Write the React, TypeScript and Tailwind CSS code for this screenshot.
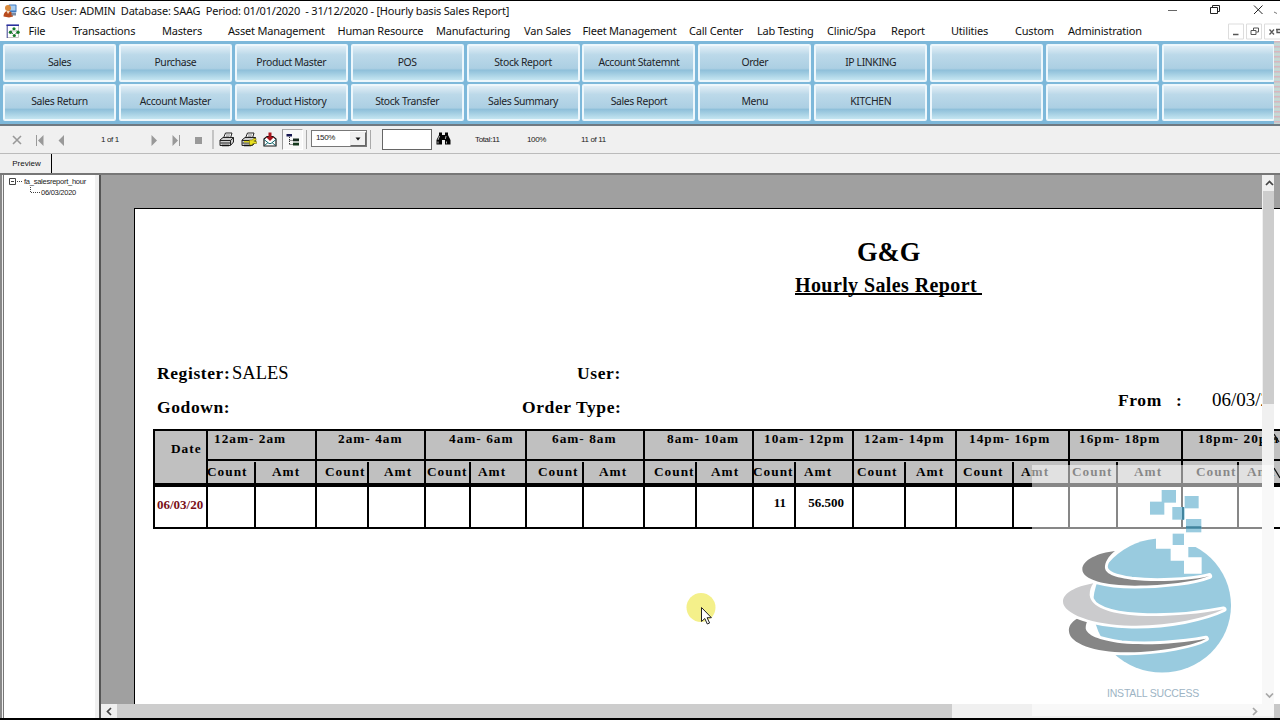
import React from "react";

const menus: [string, string][] = [
  ["File", "w-[44px]"],
  ["Transactions", "w-[89.5px]"],
  ["Masters", "w-[66px]"],
  ["Asset Management", "w-[109.5px]"],
  ["Human Resource", "w-[98.5px]"],
  ["Manufacturing", "w-[88px]"],
  ["Van Sales", "w-[58.5px]"],
  ["Fleet Management", "w-[106.5px]"],
  ["Call Center", "w-[68px]"],
  ["Lab Testing", "w-[70px]"],
  ["Clinic/Spa", "w-[64px]"],
  ["Report", "w-[60px]"],
  ["Utilities", "w-[64px]"],
  ["Custom", "w-[53px]"],
  ["Administration", "w-[152px]"],
];

const buttons = [
  ["Sales", "Purchase", "Product Master", "POS", "Stock Report", "Account Statemnt", "Order", "IP LINKING", "", "", ""],
  ["Sales Return", "Account Master", "Product History", "Stock Transfer", "Sales Summary", "Sales Report", "Menu", "KITCHEN", "", "", ""],
];

type Group = {
  label: string;
  w: string;
  cw: string;
  lp: string;
  cp: string;
  ap: string;
  count?: string;
  amt?: string;
};

const groups: Group[] = [
  { label: "12am- 2am", w: "w-[109px]", cw: "w-[48px]", lp: "pl-[6px]", cp: "-ml-px", ap: "pl-[16px]" },
  { label: "2am- 4am", w: "w-[109px]", cw: "w-[52px]", lp: "pl-[21px]", cp: "ml-[8px]", ap: "pl-[15px]" },
  { label: "4am- 6am", w: "w-[101px]", cw: "w-[45px]", lp: "pl-[23px]", cp: "ml-[1px]", ap: "pl-[7px]" },
  { label: "6am- 8am", w: "w-[118px]", cw: "w-[57px]", lp: "pl-[25px]", cp: "ml-[11px]", ap: "pl-[15px]" },
  { label: "8am- 10am", w: "w-[109px]", cw: "w-[52px]", lp: "pl-[22px]", cp: "ml-[9px]", ap: "pl-[14px]" },
  { label: "10am- 12pm", w: "w-[100px]", cw: "w-[42px]", lp: "pl-[10px]", cp: "-ml-px", ap: "pl-[8px]", count: "11", amt: "56.500" },
  { label: "12am- 14pm", w: "w-[103px]", cw: "w-[52px]", lp: "pl-[10px]", cp: "ml-[3px]", ap: "pl-[10px]" },
  { label: "14pm- 16pm", w: "w-[113px]", cw: "w-[57px]", lp: "pl-[12px]", cp: "ml-[6px]", ap: "pl-[7px]" },
  { label: "16pm- 18pm", w: "w-[113px]", cw: "w-[48px]", lp: "pl-[9px]", cp: "ml-[2px]", ap: "pl-[16px]" },
  { label: "18pm- 20pm", w: "w-[113px]", cw: "w-[56px]", lp: "pl-[15px]", cp: "ml-[13px]", ap: "pl-[8px]" },
];

function AppIcon() {
  return (
    <svg width="14" height="14" viewBox="0 0 14 14">
      <rect x="5.5" y="0.5" width="8" height="8" rx="1" fill="#3f79c0" />
      <rect x="7" y="1.5" width="5.5" height="5" fill="#a8cdf0" />
      <circle cx="5" cy="4" r="3" fill="#d98a3c" />
      <path d="M0.5 12.5c0-3.5 2-5.5 4.5-5.5s5 2 5 5.5l-4 1z" fill="#b84a1c" />
      <path d="M3.5 7l1.5 3 2-3z" fill="#f5dcc0" />
      <rect x="8.5" y="9" width="4.5" height="2.5" fill="#7c8aa0" />
    </svg>
  );
}

function ChildIcon() {
  return (
    <svg width="15" height="15" viewBox="0 0 15 15">
      <path d="M1 13.5H12.5V2" fill="none" stroke="#c4c4c4" />
      <path d="M1.2 14V1" stroke="#3a3f8f" strokeWidth="1" />
      <path d="M0.5 1.200H13" stroke="#2a2f9f" strokeWidth="1.6" />
      <g fill="#157a2a">
        <circle cx="8" cy="4.8" r="1.6" />
        <circle cx="4.5" cy="8.2" r="1.7" />
        <circle cx="12" cy="8.2" r="1.7" />
        <circle cx="8.3" cy="11.5" r="1.6" />
      </g>
      <path d="M6 6.5l.8.8M10.2 6.5l-.8.8M6 10l.8-.8M10.5 10l-.8-.8" stroke="#222" strokeWidth="0.9" />
    </svg>
  );
}

function Printer({ color }: { color?: boolean }) {
  return (
    <svg width="16" height="15" viewBox="0 0 16 15">
      <path d="M4.500 6L6.500 1H13L11.500 6z" fill="#fff" stroke="#222" />
      <path d="M7 3h4M6.500 4.700h4" stroke="#555" strokeWidth="0.7" />
      <path d="M1 8L4 5.500H14.500V10L11.500 13.500H1z" fill="#d0d0d0" stroke="#222" />
      <path d="M1 8.500H11.500L14.500 5.700M1.500 11H11.500M11.500 8.500V13" fill="none" stroke="#222" />
      <path d="M3 13.500H10" stroke="#111" strokeWidth="1.5" />
      {color && (
        <>
          <path d="M3 9.700H9" stroke="#d8d020" strokeWidth="1.5" />
          <path d="M8.500 8h3l1-1.500H15v2h-2v1h2.500v2H12l-1 1.500H8.500z" fill="#e8e020" stroke="#76700a" strokeWidth="0.6" />
        </>
      )}
    </svg>
  );
}

function ExportIcon() {
  return (
    <svg width="14" height="15" viewBox="0 0 14 15">
      <path d="M1 7L4 4.500h6l3 2.500V14H1z" fill="#fff" stroke="#111" strokeWidth="1.2" />
      <path d="M1 7.500l5 4h2l5-4M1.500 13.500l3.500-3M12.500 13.500l-3.500-3" fill="none" stroke="#146a70" />
      <path d="M5.500 0.500h3V5H11L7 9 3 5h2.500z" fill="#a8141c" />
    </svg>
  );
}

function TreeIcon() {
  return (
    <svg width="14" height="13" viewBox="0 0 14 13">
      <rect x="0.5" y="1" width="5.5" height="2.5" fill="#161650" />
      <path d="M3.500 4V11.500M3.500 7.500H7M3.500 11.500H7" fill="none" stroke="#333" strokeDasharray="1 1" />
      <rect x="7" y="5.5" width="6" height="2.8" fill="#14281c" />
      <rect x="7" y="9.7" width="6" height="2.8" fill="#14381c" />
    </svg>
  );
}

function Binoculars() {
  return (
    <svg width="15" height="13" viewBox="0 0 15 13" fill="#050505">
      <path d="M3 0.500h3V3h3V0.500h3V3l2.500 5v4.500H9V8H6v4.500H0.500V8L3 3z" />
      <path d="M3.500 4L2 8M10 4L9.300 7M2 9.500v2M10.500 9.500v2" stroke="#ddd" strokeWidth="0.8" />
    </svg>
  );
}

function WindowRow() {
  return (
    <header className="flex h-[21px] shrink-0 items-center border-t border-black bg-white text-[#111]">
      <span className="ml-[3px] flex w-[19px] shrink-0"><AppIcon /></span>
      <span className="w-[1145px] shrink-0 whitespace-pre text-[11px] leading-[20px] tracking-[-0.205px]">
        {"G&G  User: ADMIN  Database: SAAG  Period: 01/01/2020  - 31/12/2020 - [Hourly basis Sales Report]"}
      </span>
      <svg width="113" height="20" viewBox="1167 0 113 20" fill="none" stroke="#222" strokeWidth="1">
        <path d="M1168 9.500h9" stroke="#666" />
        <path d="M1210.500 6.500h7v6h-7zM1212.500 6v-1.500h7v6h-2" />
        <path d="M1254 4.500l8.500 8.500M1262.500 4.500l-8.500 8.500" />
        <path d="M1274 11l3 1.500" stroke="#777" />
      </svg>
    </header>
  );
}

function MenuRow() {
  return (
    <nav className="flex h-[20px] shrink-0 items-center bg-white text-[11px] text-[#111]">
      <span className="ml-[6px] flex w-[22.5px] shrink-0"><ChildIcon /></span>
      {menus.map(([m, w]) => (
        <span key={m} className={`${w} shrink-0 whitespace-nowrap leading-[18px] tracking-[-0.2px]`}>{m}</span>
      ))}
      <svg className="shrink-0" width="60" height="20" viewBox="1220 0 60 20" fill="none" stroke="#555">
        <path d="M1228.500 3h15v15h-15zM1246.500 3h15v15h-15zM1280 3h-15.500v15h16" stroke="#ddd" />
        <path d="M1233 13.500h5.500" strokeWidth="1.5" />
        <path d="M1251 9.500h5v4h-5zM1253.500 9v-2h5v4h-2" />
        <path d="M1269.500 8.500l4.500 5M1274 8.500l-4.500 5M1276 8.500h4M1277 8.500v3h3" strokeWidth="1.3" />
      </svg>
    </nav>
  );
}

function ButtonBar() {
  return (
    <section className="flex h-[85px] shrink-0 flex-col gap-[2px] overflow-hidden border-b-2 border-[#707a82] bg-[#7db8da] pt-[3px] pl-[3px]">
      {buttons.map((row, r) => (
        <div key={r} className="flex shrink-0 gap-[2.9px]">
          {row.map((b, i) => (
            <button
              key={i}
              className="flex h-[37.5px] w-[113px] shrink-0 items-center justify-center rounded-[2px] border-2 border-[#edf7fc] bg-[linear-gradient(#eaf3f9_0%,#bcd9e9_28%,#accfe3_64%,#8fc0da_69%,#9dcae0_76%,#d0edf6_100%)] bg-origin-border text-[10.4px] tracking-[-0.37px] whitespace-nowrap text-[#1d2429]"
            >
              {b}
            </button>
          ))}
        </div>
      ))}
    </section>
  );
}

function Toolbar() {
  return (
    <div className="flex h-[27px] shrink-0 items-center bg-[#f0f0f0] font-['Liberation_Sans',sans-serif] text-[8px] tracking-[-0.35px] text-[#222]">
      <svg className="ml-[3px]" width="97" height="26" viewBox="3 0 97 26" fill="#999" stroke="#999">
        <path d="M13 9l8 8M21 9l-8 8" strokeWidth="1.6" />
        <path d="M36.500 8v11" />
        <path d="M43.500 8v11l-5.500-5.500zM64 8v11l-5.500-5.500z" stroke="none" />
      </svg>
      <span className="w-[45px] pl-[1px]">1 of 1</span>
      <svg width="72" height="26" viewBox="145 0 72 26" fill="#999" stroke="#999">
        <path d="M151.500 8v11l5.500-5.500zM172.500 8v11l5.500-5.500z" stroke="none" />
        <path d="M179.500 8v11M213 3v19" />
        <path d="M195 10h7v7h-7z" stroke="none" />
      </svg>
      <span className="ml-[2px] flex w-[22px]"><Printer /></span>
      <span className="flex w-[22px]"><Printer color /></span>
      <span className="flex w-[19px]"><ExportIcon /></span>
      <span className="flex h-[21px] w-[21px] items-center justify-center border border-white border-t-[#aaa] border-l-[#999] bg-[#f8f8f8]"><TreeIcon /></span>
      <span className="mr-[4px] ml-[3px] h-[19px] w-px bg-[#aaa]" />
      <span className="flex h-[17px] w-[56px] -translate-y-px items-center justify-between border border-[#777] bg-white pl-[4px]">
        <span className="pb-[2px]">150%</span>
        <span className="flex h-[14px] w-[16px] items-center justify-center border border-[#eee] border-r-[#666] border-b-[#666] bg-[#f0f0f0]">
          <svg width="6" height="4"><path d="M0.500 0.500h5L3 3.500z" fill="#111" /></svg>
        </span>
      </span>
      <span className="ml-[3px] h-[19px] w-px bg-[#aaa]" />
      <span className="ml-[11px] h-[21px] w-[50px] border border-[#666] bg-white" />
      <span className="ml-[4px] flex w-[39px] pb-[2px]"><Binoculars /></span>
      <span className="w-[52px]">Total:11</span>
      <span className="w-[54px]">100%</span>
      <span className="whitespace-nowrap">11 of 11</span>
    </div>
  );
}

function TreePanel() {
  return (
    <aside className="flex w-[99px] shrink-0 border-l-2 border-[#888] bg-[#f0f0f0] font-['Liberation_Sans',sans-serif] text-[7.5px] tracking-[-0.25px] text-[#222]">
      <div className="ml-px w-[92px] border-l border-[#777] bg-white pt-px">
        <div className="flex h-[11px] items-center">
          <svg className="ml-[5px]" width="15" height="9" viewBox="0 0 15 9" fill="none" stroke="#444">
            <path d="M0.500 1.500h6v6h-6zM2 4.500h3" />
            <path d="M8 4.500h6" strokeDasharray="1 1" />
          </svg>
          <span className="whitespace-nowrap">fa_salesreport_hour</span>
        </div>
        <div className="flex h-[11px] items-center">
          <svg className="ml-[26px]" width="11" height="11" viewBox="0 0 11 11" fill="none" stroke="#444">
            <path d="M0.500 0v5.500H10" strokeDasharray="1 1" />
          </svg>
          <span>06/03/2020</span>
        </div>
      </div>
    </aside>
  );
}

function ReportTable() {
  const head = "whitespace-pre text-[13.3px] leading-[16px] tracking-[1px]";
  return (
    <div className="ml-[18px] w-[1150px] shrink-0 border-t-2 border-l-2 border-black font-bold">
      <div className="flex h-[56px] border-b-4 border-black bg-[#c0c0c0]">
        <div className="w-[53px] shrink-0 border-r-2 border-black pt-[10px] pl-[16px]">
          <div className={head}>Date</div>
        </div>
        {groups.map((g) => (
          <div key={g.label} className={`${g.w} flex shrink-0 flex-col border-r-2 border-black`}>
            <div className={`${g.lp} ${head} h-[30px] border-b-2 border-black`}>{g.label}</div>
            <div className="flex grow pt-px">
              <div className={`${g.cw} shrink-0 border-r-2 border-black pt-[2px]`}>
                <div className={`${g.cp} ${head}`}>Count</div>
              </div>
              <div className={`${g.ap} ${head} pt-[2px]`}>Amt</div>
            </div>
          </div>
        ))}
      </div>
      <div className="flex h-[42px] border-b-2 border-black bg-white text-[13px] leading-[18px]">
        <div className="w-[53px] shrink-0 border-r-2 border-black pt-[9px] pl-[2px] text-[#7a1018]">06/03/20</div>
        {groups.map((g) => (
          <div key={g.label} className={`${g.w} flex shrink-0 border-r-2 border-black`}>
            <div className={`${g.cw} shrink-0 border-r-2 border-black pt-[7px] pr-[8px] text-right`}>{g.count}</div>
            <div className="grow pt-[7px] pr-[8px] text-right">{g.amt}</div>
          </div>
        ))}
      </div>
    </div>
  );
}

function ReportPage() {
  const label = "text-[17.5px] font-bold tracking-[0.6px] leading-[24px] whitespace-nowrap";
  return (
    <div className="flex h-[496px] w-[1200px] flex-col border-t border-l border-black bg-white font-['Liberation_Serif',serif] text-black">
      <h1 className="mt-[27px] ml-[722px] text-[26.5px] leading-[32px] font-bold">G&amp;G</h1>
      <h2 className="mt-[7px] ml-[660px] h-[20px] w-[187px] border-b-2 border-black text-[20px] leading-[21px] font-bold tracking-[0.4px] whitespace-pre">Hourly Sales Report</h2>
      <div className="mt-[66px] ml-[22px] flex h-[68px]">
        <div className="flex w-[365px] shrink-0 flex-col gap-[10px]">
          <div className="flex items-center">
            <span className={`${label} w-[75px]`}>Register:</span>
            <span className="text-[18.5px] leading-[24px]">SALES</span>
          </div>
          <div className={label}>Godown:</div>
        </div>
        <div className="flex w-[596px] shrink-0 flex-col gap-[10px]">
          <div className={`${label} pl-[55px]`}>User:</div>
          <div className={label}>Order Type:</div>
        </div>
        <div className="flex pt-[27px]">
          <span className={`${label} w-[58px]`}>From</span>
          <span className={`${label} w-[36px]`}>:</span>
          <span className="w-[51px] overflow-hidden text-[19px] leading-[24px]">06/03/2</span>
        </div>
      </div>
      <ReportTable />
    </div>
  );
}

function Watermark() {
  return (
    <div className="absolute top-[465px] left-[1032px] h-[251px] w-[242px] bg-white/53">
      <svg className="block" width="242" height="213" viewBox="1032 465 242 213">
        <ellipse cx="1162" cy="605.5" rx="69" ry="67" fill="#99cbdf" />
        <g transform="translate(1055 485) scale(0.3333)">
          <path d="M303 140V191H347V227H387V266H440V217H400V186H425V140z" fill="#fff" />
          <g fill="#99cbdf">
            <rect x="320" y="15" width="43" height="38" />
            <rect x="285" y="50" width="43" height="39" />
            <rect x="389" y="33" width="42" height="37" />
            <rect x="352" y="66" width="37" height="38" />
            <rect x="393" y="102" width="46" height="40" />
            <rect x="353" y="146" width="34" height="34" />
          </g>
          <path d="M381 66h6v38h-6zM393 124h46v7h-46z" fill="#41849e" />
          <g stroke="#fff" strokeWidth="17" strokeLinejoin="round" paintOrder="stroke">
            <path
              d="M68 400C48 412 40 425 42 440C45 475 120 503 220 502C320 501 420 480 453 461C380 475 280 482 200 475C130 466 95 450 92 430C92 418 95 412 98 407z"
              fill="#868686"
            />
            <path d="M102 412L112 414L128 452L104 436z" fill="#fff" strokeWidth="4" />
            <path
              d="M115 295C60 305 24 325 24 350C24 385 110 420 230 422C340 424 450 400 506 373C420 390 320 396 250 392C160 386 108 366 104 330C104 315 108 305 115 295z"
              fill="#cbcbcd"
            />
            <path
              d="M180 198C130 203 82 225 82 253C82 285 150 302 240 302C330 302 420 290 463 273C400 288 300 292 230 284C165 275 148 262 150 243C152 225 168 207 180 198z"
              fill="#868686"
            />
          </g>
        </g>
      </svg>
      <div className="mt-[7px] pl-[75px] font-['Liberation_Sans',sans-serif] text-[10.5px] leading-[16px] tracking-[-0.2px] whitespace-nowrap text-[#9db4c4]">INSTALL SUCCESS</div>
    </div>
  );
}

function Chevron({ d }: { d: string }) {
  return (
    <svg width="9" height="9" viewBox="0 0 9 9" fill="none" stroke="#444" strokeWidth="1.7"><path d={d} /></svg>
  );
}

function VerticalScroll() {
  return (
    <div className="absolute top-[175px] left-[1262px] flex h-[529px] w-[12px] flex-col items-center bg-[#f0f0f0]">
      <div className="flex h-[16px] w-full items-center justify-center pl-[2px]"><Chevron d="M1 6l3.500-3.500L8 6" /></div>
      <div className="ml-px h-[213px] w-[11px] bg-[#cdcdcd]" />
      <div className="mt-auto flex h-[18px] w-full items-center justify-center pl-[2px]"><Chevron d="M1 2.500L4.500 6 8 2.500" /></div>
    </div>
  );
}

export default function App() {
  return (
    <main className="relative flex h-[720px] w-[1280px] flex-col overflow-hidden border-b-2 border-black bg-[#f0f0f0] font-['Noto_Sans',sans-serif]">
      <WindowRow />
      <MenuRow />
      <ButtonBar />
      <Toolbar />
      <div className="flex h-[22px] shrink-0 border-t border-b-2 border-t-[#bbb] border-b-[#777] font-['Liberation_Sans',sans-serif] text-[8px] text-[#111]">
        <div className="ml-[2px] flex w-[50px] items-center justify-center border-r border-black pt-px">Preview</div>
      </div>
      <div className="flex h-[543px] shrink-0">
        <TreePanel />
        <div className="flex w-[1181px] flex-col overflow-hidden border-l-2 border-[#555]">
          <div className="h-[529px] shrink-0 overflow-hidden bg-[#a0a0a0] pt-[33px] pl-[33px]">
            <ReportPage />
          </div>
          <div className="flex h-[14px] items-center bg-[#f0f0f0]">
            <div className="flex w-[16px] justify-center"><Chevron d="M6 1L2.500 4.500 6 8" /></div>
            <div className="h-full w-[835px] bg-[#cdcdcd]" />
            <div className="ml-auto flex w-[24px]"><Chevron d="M3 1l3.500 3.500L3 8" /></div>
            <div className="h-full w-[6px] shrink-0 bg-[#c8c8c8]" />
          </div>
        </div>
      </div>
      <VerticalScroll />
      <Watermark />
      <svg className="absolute top-[431px] left-[1274px]" width="6" height="52" viewBox="0 0 6 52" fill="none" stroke="#111" strokeWidth="1.3">
        <path d="M0 3l5 8M0 8h4M0 37l6 10" />
      </svg>
      <div className="absolute top-[41px] left-[1274px] h-[83px] w-[6px] bg-[repeating-linear-gradient(#d9b8bd_0px,#d9b8bd_1px,#bcd2dc_2px,#cddccb_3px,#bcd2dc_5px)]" />
      <div className="absolute top-[593px] left-[686px]">
        <svg width="30" height="34" viewBox="0 0 30 34">
          <circle cx="15" cy="14.5" r="14.5" fill="#f4f08a" />
          <path d="M15.500 14.500v14l3.300-3 2.500 5.500 2.300-1-2.500-5.300h4.300z" fill="#fff" stroke="#222" />
        </svg>
      </div>
    </main>
  );
}
